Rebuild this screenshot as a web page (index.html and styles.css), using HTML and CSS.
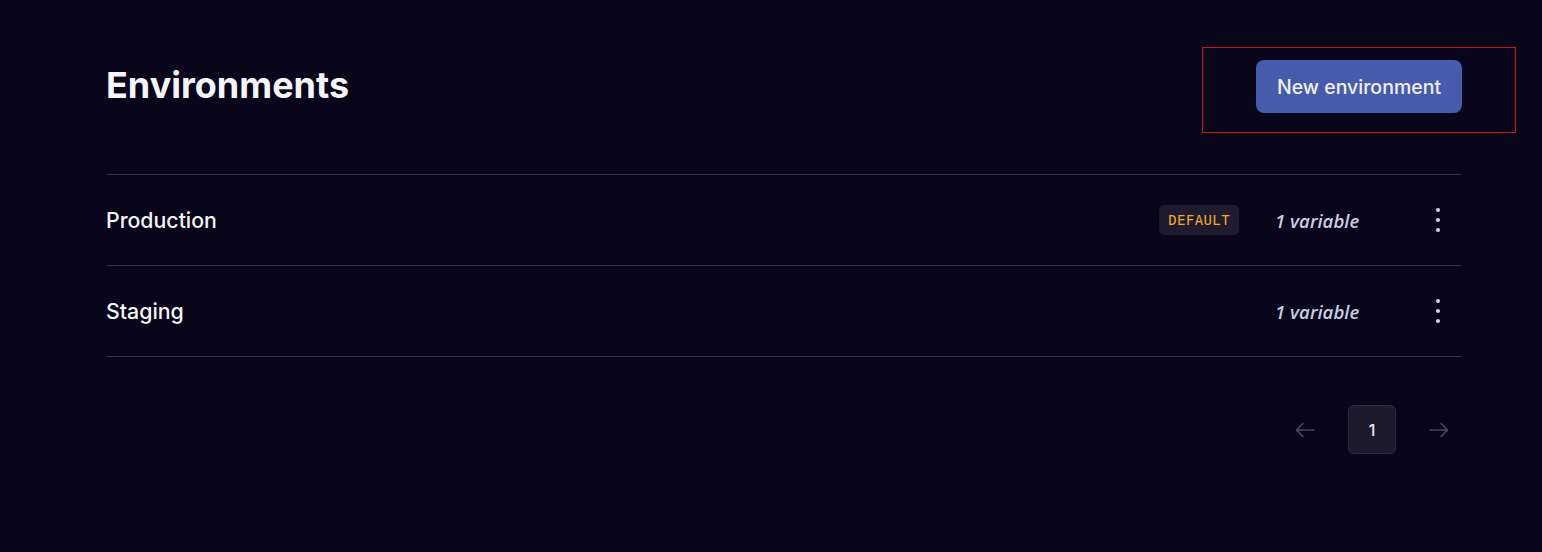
FILE: index.html
```html
<!DOCTYPE html>
<html>
<head>
<meta charset="utf-8">
<link rel="stylesheet" href="styles.css">
</head>
<body>
<main class="page">
  <header class="header">
    <h1 class="title">Environments</h1>
    <div class="action">
      <button class="btn-primary">New environment</button>
      <span class="highlight"></span>
    </div>
  </header>
  <ul class="list">
    <li class="row">
      <span class="name">Production</span>
      <span class="badge">DEFAULT</span>
      <span class="count">1 variable</span>
      <span class="kebab"><i></i><i></i><i></i></span>
    </li>
    <li class="row">
      <span class="name">Staging</span>
      <span class="count">1 variable</span>
      <span class="kebab"><i></i><i></i><i></i></span>
    </li>
  </ul>
  <nav class="pager">
    <span class="arrow">
      <svg width="20" height="16" viewBox="0 0 20 16" fill="none" stroke="currentColor" stroke-width="1.6" stroke-linecap="round" stroke-linejoin="round"><path d="M19 8H1.5M8 1.5 1.5 8 8 14.5"/></svg>
    </span>
    <span class="page-num">1</span>
    <span class="arrow">
      <svg width="20" height="16" viewBox="0 0 20 16" fill="none" stroke="currentColor" stroke-width="1.6" stroke-linecap="round" stroke-linejoin="round"><path d="M1 8h17.5M12 1.5 18.5 8 12 14.5"/></svg>
    </span>
  </nav>
</main>
</body>
</html>
```
FILE: styles.css
```css
* { box-sizing: border-box; }
html, body { margin: 0; padding: 0; }
body {
  background: #09051a;
  color: #f4f6fb;
  font-family: Inter, "Noto Sans", sans-serif;
  width: 1542px;
  height: 552px;
  overflow: hidden;
}
.page {
  padding: 60px 80px 0 106px;
  width: 1542px;
}
.header {
  display: flex;
  justify-content: space-between;
  align-items: flex-start;
  width: 1356px;
  height: 114px;
}
.title {
  margin: 0;
  font-size: 36px;
  font-weight: 700;
  letter-spacing: 0;
  line-height: 50px;
}
.action { position: relative; }
.btn-primary {
  display: block;
  width: 206px;
  height: 53px;
  border: 0;
  border-radius: 8px;
  background: #465bab;
  color: #eef1fb;
  font-family: Inter, sans-serif;
  font-size: 19.5px;
  font-weight: 500;
  cursor: pointer;
}
.highlight {
  position: absolute;
  left: -54px;
  top: -13px;
  width: 314px;
  height: 86px;
  border: 1px solid #c8161c;
  pointer-events: none;
}
.list {
  list-style: none;
  margin: 0;
  padding: 0;
  width: 1356px;
  border-top: 1px solid #34304a;
}
.row {
  display: flex;
  align-items: center;
  height: 91px;
  border-bottom: 1px solid #34304a;
}
.name {
  flex: 1;
  font-size: 21.3px;
  font-weight: 500;
  color: #f4f6fb;
}
.badge {
  display: inline-flex;
  align-items: center;
  height: 30px;
  padding: 0 9px;
  border-radius: 5px;
  background: #1e1b2e;
  color: #f3a82e;
  font-family: "DejaVu Sans Mono", "Liberation Mono", monospace;
  font-size: 14px;
  letter-spacing: 0.4px;
  margin-right: 36px;
}
.count {
  font-family: "Open Sans", sans-serif;
  font-style: italic;
  font-weight: 600;
  font-size: 18.6px;
  color: #c9cde0;
  width: 84px;
  white-space: nowrap;
}
.kebab {
  display: flex;
  flex-direction: column;
  align-items: center;
  gap: 6px;
  width: 24px;
  margin-left: 67px;
  margin-right: 12px;
}
.kebab i {
  display: block;
  width: 4px;
  height: 4px;
  border-radius: 50%;
  background: #d4d6e2;
}
.pager {
  display: flex;
  justify-content: flex-end;
  align-items: center;
  width: 1356px;
  margin-top: 48px;
  gap: 33px;
  padding-right: 13px;
}
.arrow {
  display: flex;
  color: #4a4560;
  width: 20px;
  justify-content: center;
}
.page-num {
  display: flex;
  align-items: center;
  justify-content: center;
  width: 48px;
  height: 49px;
  border-radius: 6px;
  background: #1e1a2d;
  border: 1px solid #2f2b42;
  color: #e7e9f3;
  font-size: 16px;
  font-weight: 500;
}
```
